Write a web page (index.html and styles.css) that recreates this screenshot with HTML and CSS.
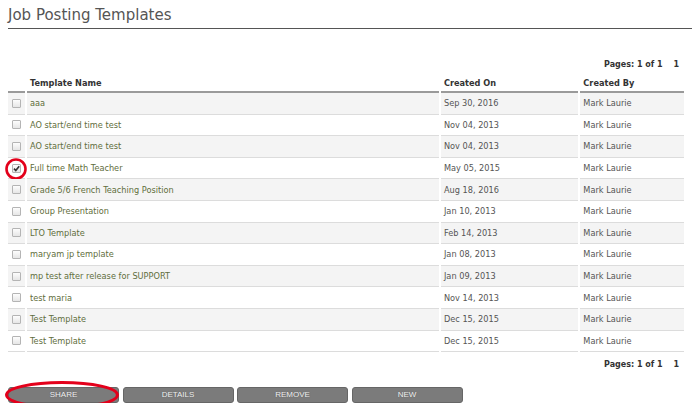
FILE: index.html
```html
<!DOCTYPE html>
<html>
<head>
<meta charset="utf-8">
<link rel="stylesheet" href="styles.css">
</head>
<body>
<div class="page">
  <h1 class="title">Job Posting Templates</h1>
  <div class="pager pager-top">Pages: 1 of 1 <span class="pnum">1</span></div>
  <table class="grid">
    <thead>
      <tr>
        <th class="c-chk"></th>
        <th class="c-name">Template Name</th>
        <th class="c-date">Created On</th>
        <th class="c-by">Created By</th>
      </tr>
    </thead>
    <tbody>
      <tr class="odd"><td class="c-chk"><span class="cb"></span></td><td class="c-name">aaa</td><td class="c-date">Sep 30, 2016</td><td class="c-by">Mark Laurie</td></tr>
      <tr><td class="c-chk"><span class="cb"></span></td><td class="c-name">AO start/end time test</td><td class="c-date">Nov 04, 2013</td><td class="c-by">Mark Laurie</td></tr>
      <tr class="odd"><td class="c-chk"><span class="cb"></span></td><td class="c-name">AO start/end time test</td><td class="c-date">Nov 04, 2013</td><td class="c-by">Mark Laurie</td></tr>
      <tr><td class="c-chk mark-cell"><span class="cb checked"><svg viewBox="0 0 9 9" width="9" height="9"><path d="M2 4.6 L3.8 6.6 L7.2 2.2" fill="none" stroke="#333" stroke-width="1.6"/></svg></span><svg class="ring" viewBox="0 0 24 24" width="24" height="24"><circle cx="12" cy="12" r="9.5" fill="none" stroke="#e3001b" stroke-width="2.6"/></svg></td><td class="c-name">Full time Math Teacher</td><td class="c-date">May 05, 2015</td><td class="c-by">Mark Laurie</td></tr>
      <tr class="odd"><td class="c-chk"><span class="cb"></span></td><td class="c-name">Grade 5/6 French Teaching Position</td><td class="c-date">Aug 18, 2016</td><td class="c-by">Mark Laurie</td></tr>
      <tr><td class="c-chk"><span class="cb"></span></td><td class="c-name">Group Presentation</td><td class="c-date">Jan 10, 2013</td><td class="c-by">Mark Laurie</td></tr>
      <tr class="odd"><td class="c-chk"><span class="cb"></span></td><td class="c-name">LTO Template</td><td class="c-date">Feb 14, 2013</td><td class="c-by">Mark Laurie</td></tr>
      <tr><td class="c-chk"><span class="cb"></span></td><td class="c-name">maryam jp template</td><td class="c-date">Jan 08, 2013</td><td class="c-by">Mark Laurie</td></tr>
      <tr class="odd"><td class="c-chk"><span class="cb"></span></td><td class="c-name">mp test after release for SUPPORT</td><td class="c-date">Jan 09, 2013</td><td class="c-by">Mark Laurie</td></tr>
      <tr><td class="c-chk"><span class="cb"></span></td><td class="c-name">test maria</td><td class="c-date">Nov 14, 2013</td><td class="c-by">Mark Laurie</td></tr>
      <tr class="odd"><td class="c-chk"><span class="cb"></span></td><td class="c-name">Test Template</td><td class="c-date">Dec 15, 2015</td><td class="c-by">Mark Laurie</td></tr>
      <tr><td class="c-chk"><span class="cb"></span></td><td class="c-name">Test Template</td><td class="c-date">Dec 15, 2015</td><td class="c-by">Mark Laurie</td></tr>
    </tbody>
  </table>
  <div class="pager pager-bottom">Pages: 1 of 1 <span class="pnum">1</span></div>
  <div class="actions">
    <div class="btn-wrap">
      <button class="btn">SHARE</button>
      <svg class="oval" viewBox="0 0 116 30" width="116" height="30"><ellipse cx="58" cy="15" rx="55.5" ry="12.5" fill="none" stroke="#e3001b" stroke-width="3"/></svg>
    </div>
    <button class="btn">DETAILS</button>
    <button class="btn">REMOVE</button>
    <button class="btn">NEW</button>
  </div>
</div>
</body>
</html>
```

FILE: styles.css
```css
html, body {
  margin: 0;
  padding: 0;
  background: #fff;
}
.page {
  padding: 5px 8px 0 8px;
  font-family: "DejaVu Sans", Verdana, sans-serif;
  color: #555;
}
.title {
  margin: 0 -8px 0 0;
  font-size: 15px;
  font-weight: normal;
  line-height: 21px;
  padding-bottom: 2px;
  color: #555;
  border-bottom: 1px solid #555;
}
.pager {
  text-align: right;
  font-size: 8px;
  font-weight: bold;
  color: #333;
  padding-right: 5px;
  line-height: 12px;
}
.pager .pnum {
  margin-left: 8px;
}
.pager-top {
  margin-top: 30px;
}
.pager-bottom {
  margin-top: 7px;
}
.grid {
  width: 680px;
  border-collapse: separate;
  border-spacing: 2px 0;
  margin: 3px -2px 0 -2px;
  font-size: 8.2px;
}
.grid th {
  text-align: left;
  font-weight: bold;
  color: #333;
  height: 17px;
  padding: 0 3px;
  border-bottom: 2px solid #9a9a9a;
  vertical-align: middle;
}
.grid td {
  height: 20.6px;
  padding: 0 3px;
  border-bottom: 1px solid #dcdcdc;
  vertical-align: middle;
  white-space: nowrap;
}
.grid tr.odd td {
  background: #f4f4f4;
}
.grid .c-chk {
  width: 10px;
  padding: 0 3px 0 4px;
  position: relative;
}
.grid .c-name {
  width: 408px;
  color: #5f6e3c;
}
.grid th.c-name {
  color: #333;
}
.grid .c-date {
  width: 132px;
}
.grid .c-by {
  width: 98px;
}
.cb {
  display: block;
  width: 7px;
  height: 7px;
  border: 1px solid #b4b4b4;
  border-radius: 1px;
  background: linear-gradient(#fdfdfd, #e6e6e6);
}
.cb.checked {
  position: relative;
}
.cb.checked svg {
  position: absolute;
  left: -1px;
  top: -1px;
}
.ring {
  position: absolute;
  left: -4px;
  top: -1px;
}
.actions {
  display: flex;
  gap: 3.5px;
  margin-top: 16px;
}
.btn-wrap {
  position: relative;
  display: flex;
}
.btn {
  width: 111px;
  height: 16px;
  padding: 0;
  margin: 0;
  border: 1px solid #666;
  border-radius: 3px;
  background: #7b7b7b;
  color: #f2f2f2;
  font-family: "Liberation Sans", Arial, sans-serif;
  font-size: 8px;
  line-height: 14px;
  text-shadow: 0 0 1px #555;
}
.oval {
  position: absolute;
  left: -4px;
  top: -7px;
  pointer-events: none;
}
```
